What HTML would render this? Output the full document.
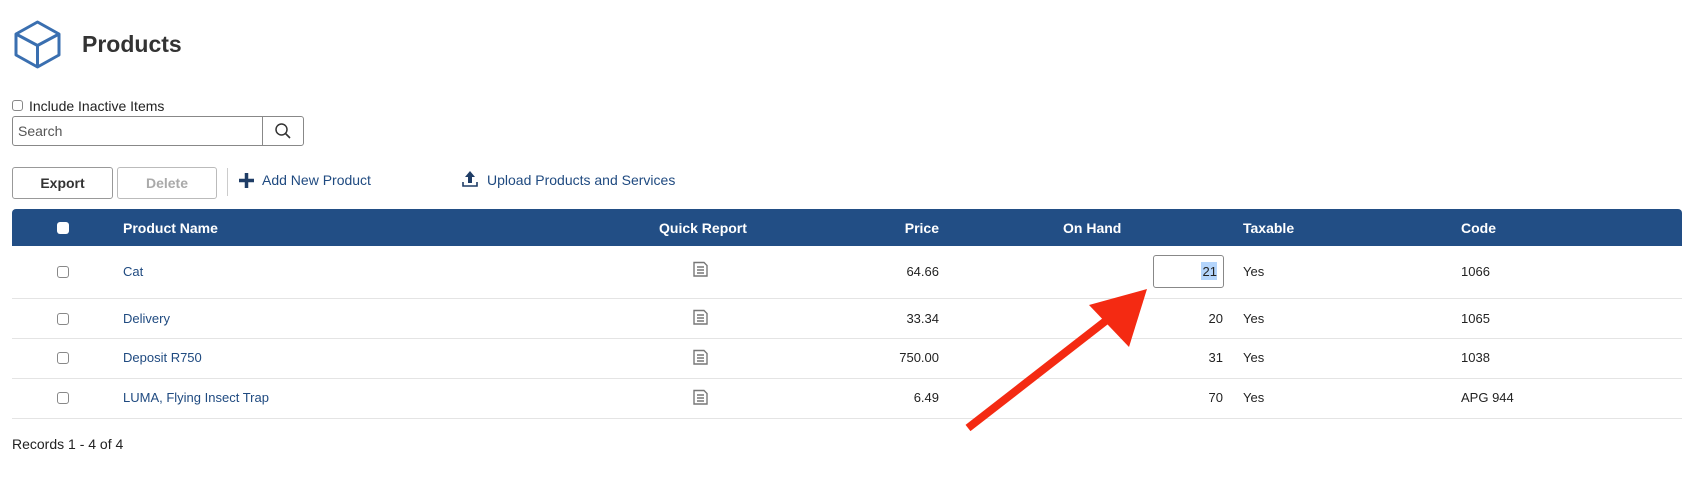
<!DOCTYPE html>
<html><head><meta charset="utf-8"><style>
*{box-sizing:border-box;margin:0;padding:0}
body{width:1696px;height:493px;background:#fff;font-family:"Liberation Sans",Arial,sans-serif;color:#222;position:relative;overflow:hidden}
.a{position:absolute}
.cb{position:absolute;width:12px;height:12px;border:1px solid #888;border-radius:3px;background:#fff}
.btn{position:absolute;border:1px solid #999;border-radius:3px;font-size:14px;font-weight:bold;text-align:center;line-height:30px;background:#fff}
.hdr{position:absolute;left:12px;top:209px;width:1670px;height:37px;background:#224e85;border-radius:4px 4px 0 0}
.h{position:absolute;color:#fff;font-weight:bold;font-size:14px;top:220px}
.t{position:absolute;font-size:13px}
.lnk{color:#1f4a80}
.sep{position:absolute;left:12px;width:1670px;height:1px;background:#e4e4e4}
.r{text-align:right}
</style></head><body>
<svg class="a" style="left:0;top:0" width="80" height="80"><path d="M37.5 22 L59 34 V55 L37.5 67 L16 55 V34 Z M16 34 L37.5 45.5 L59 34 M37.5 45.5 V67" fill="none" stroke="#3a6fb0" stroke-width="3" stroke-linejoin="round"/></svg>
<div class="a" style="left:82px;top:31px;font-size:23px;font-weight:bold;color:#333">Products</div>
<div class="cb" style="left:12px;top:100px;width:11px;height:11px"></div>
<div class="t" style="left:29px;top:98px;font-size:14px">Include Inactive Items</div>
<div class="a" style="left:12px;top:116px;width:292px;height:30px;border:1px solid #888;border-radius:3px"></div>
<div class="a" style="left:262px;top:116px;width:1px;height:30px;background:#888"></div>
<div class="t" style="left:18px;top:123px;font-size:14px;color:#555">Search</div>
<svg class="a" style="left:274px;top:122px" width="18" height="18" viewBox="0 0 18 18"><circle cx="7.5" cy="7.5" r="5.5" fill="none" stroke="#333" stroke-width="1.5"/><path d="M11.5 11.5 L16 16" stroke="#333" stroke-width="1.6"/></svg>
<div class="btn" style="left:12px;top:167px;width:101px;height:32px;color:#333">Export</div>
<div class="btn" style="left:117px;top:167px;width:100px;height:32px;color:#aaa;border-color:#bbb">Delete</div>
<div class="a" style="left:227px;top:168px;width:1px;height:28px;background:#ccc"></div>
<svg class="a" style="left:239px;top:173px" width="15" height="15"><path d="M7.5 0V15M0 7.5H15" stroke="#1f3d66" stroke-width="3.5"/></svg>
<div class="t lnk" style="left:262px;top:172px;font-size:14px">Add New Product</div>
<svg class="a" style="left:462px;top:170px" width="16" height="18" viewBox="0 0 16 18"><path d="M8 1 L13 7 H10 V13 H6 V7 H3 Z" fill="#1f3d66"/><path d="M1 12 V16 H15 V12" fill="none" stroke="#1f3d66" stroke-width="1.6"/></svg>
<div class="t lnk" style="left:487px;top:172px;font-size:14px">Upload Products and Services</div>
<div class="hdr"></div>
<div class="a" style="left:57px;top:222px;width:12px;height:12px;background:#fff;border-radius:3px"></div>
<div class="h" style="left:123px">Product Name</div>
<div class="h" style="left:659px">Quick Report</div>
<div class="h r" style="left:839px;width:100px">Price</div>
<div class="h" style="left:1063px">On Hand</div>
<div class="h" style="left:1243px">Taxable</div>
<div class="h" style="left:1461px">Code</div>

<div class="cb" style="left:57px;top:266px"></div>
<div class="t lnk" style="left:123px;top:264px">Cat</div>
<div class="t r" style="left:839px;top:264px;width:100px">64.66</div>
<div class="a" style="left:1153px;top:255px;width:71px;height:33px;border:1px solid #888;border-radius:3px"></div>
<div class="a" style="left:1201px;top:262px;width:16px;height:18px;background:#b4d5fc"></div>
<div class="t r" style="left:1150px;top:264px;width:67px">21</div>
<div class="t" style="left:1243px;top:264px">Yes</div>
<div class="t" style="left:1461px;top:264px">1066</div>
<div class="sep" style="top:298px"></div>

<div class="cb" style="left:57px;top:313px"></div>
<div class="t lnk" style="left:123px;top:311px">Delivery</div>
<div class="t r" style="left:839px;top:311px;width:100px">33.34</div>
<div class="t r" style="left:1150px;top:311px;width:73px">20</div>
<div class="t" style="left:1243px;top:311px">Yes</div>
<div class="t" style="left:1461px;top:311px">1065</div>
<div class="sep" style="top:338px"></div>

<div class="cb" style="left:57px;top:352px"></div>
<div class="t lnk" style="left:123px;top:350px">Deposit R750</div>
<div class="t r" style="left:839px;top:350px;width:100px">750.00</div>
<div class="t r" style="left:1150px;top:350px;width:73px">31</div>
<div class="t" style="left:1243px;top:350px">Yes</div>
<div class="t" style="left:1461px;top:350px">1038</div>
<div class="sep" style="top:378px"></div>

<div class="cb" style="left:57px;top:392px"></div>
<div class="t lnk" style="left:123px;top:390px">LUMA, Flying Insect Trap</div>
<div class="t r" style="left:839px;top:390px;width:100px">6.49</div>
<div class="t r" style="left:1150px;top:390px;width:73px">70</div>
<div class="t" style="left:1243px;top:390px">Yes</div>
<div class="t" style="left:1461px;top:390px">APG 944</div>
<div class="sep" style="top:418px"></div>

<svg class="a" style="left:0;top:0" width="1696" height="493">
<g fill="none" stroke="#777" stroke-width="1.4">
<path d="M694 262.5 H704 L707 265.5 V276 H694 Z M697 267 H704 M697 270 H704 M697 273 H704"/>
<path d="M694 310.5 H704 L707 313.5 V324 H694 Z M697 315 H704 M697 318 H704 M697 321 H704"/>
<path d="M694 350.5 H704 L707 353.5 V364 H694 Z M697 355 H704 M697 358 H704 M697 361 H704"/>
<path d="M694 390.5 H704 L707 393.5 V404 H694 Z M697 395 H704 M697 398 H704 M697 401 H704"/>
</g>
<path d="M968 428 L1112 316" stroke="#f42a12" stroke-width="8"/>
<path d="M1147 289 L1129 347 L1089 305 Z" fill="#f42a12"/>
</svg>
<div class="t" style="left:12px;top:436px;font-size:14px">Records 1 - 4 of 4</div>
</body></html>
